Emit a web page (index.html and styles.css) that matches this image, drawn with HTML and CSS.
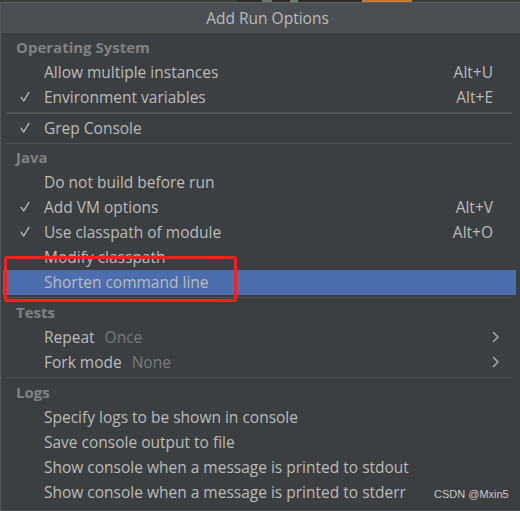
FILE: index.html
```html
<!DOCTYPE html>
<html>
<head>
<meta charset="utf-8">
<link rel="stylesheet" href="styles.css">
</head>
<body>
<div class="strip">
  <span class="seg s1"></span><span class="seg s2"></span><span class="seg s3"></span><span class="seg s4"></span><span class="seg s5"></span><span class="seg s6"></span><span class="seg s7"></span>
</div>
<div class="window">
  <div class="titlebar">Add Run Options</div>
  <div class="list">
    <div class="header">Operating System</div>
    <div class="row"><span class="check"></span><span class="label">Allow multiple instances</span><span class="key">Alt+U</span></div>
    <div class="row"><span class="check"><svg width="10" height="11" viewBox="0 0 10 11"><polyline points="0.8,5.8 3.8,9.8 9.2,0.8"/></svg></span><span class="label">Environment variables</span><span class="key">Alt+E</span></div>
    <div class="sep thick"></div>
    <div class="row"><span class="check"><svg width="10" height="11" viewBox="0 0 10 11"><polyline points="0.8,5.8 3.8,9.8 9.2,0.8"/></svg></span><span class="label">Grep Console</span></div>
    <div class="sep small"></div>
    <div class="header">Java</div>
    <div class="row"><span class="check"></span><span class="label">Do not build before run</span></div>
    <div class="row"><span class="check"><svg width="10" height="11" viewBox="0 0 10 11"><polyline points="0.8,5.8 3.8,9.8 9.2,0.8"/></svg></span><span class="label">Add VM options</span><span class="key">Alt+V</span></div>
    <div class="row"><span class="check"><svg width="10" height="11" viewBox="0 0 10 11"><polyline points="0.8,5.8 3.8,9.8 9.2,0.8"/></svg></span><span class="label">Use classpath of module</span><span class="key">Alt+O</span></div>
    <div class="row"><span class="check"></span><span class="label">Modify classpath</span></div>
    <div class="row selected"><span class="check"></span><span class="label">Shorten command line</span><span class="redbox"></span></div>
    <div class="sep"></div>
    <div class="header">Tests</div>
    <div class="row"><span class="check"></span><span class="label">Repeat</span><span class="hint">Once</span><span class="chev"><svg width="7" height="12" viewBox="0 0 7 12"><polyline points="1,1 6,6 1,11"/></svg></span></div>
    <div class="row"><span class="check"></span><span class="label">Fork mode</span><span class="hint">None</span><span class="chev"><svg width="7" height="12" viewBox="0 0 7 12"><polyline points="1,1 6,6 1,11"/></svg></span></div>
    <div class="sep"></div>
    <div class="header">Logs</div>
    <div class="row"><span class="check"></span><span class="label">Specify logs to be shown in console</span></div>
    <div class="row"><span class="check"></span><span class="label">Save console output to file</span></div>
    <div class="row"><span class="check"></span><span class="label">Show console when a message is printed to stdout</span></div>
    <div class="row"><span class="check"></span><span class="label">Show console when a message is printed to stderr</span><span class="watermark">CSDN @Mxin5</span></div>
  </div>
</div>
</body>
</html>
```
FILE: styles.css
```css
html, body {
  margin: 0;
  padding: 0;
}
body {
  width: 520px;
  height: 511px;
  overflow: hidden;
  background: #3c3f41;
  font-family: "Open Sans", "Noto Sans", sans-serif;
  color: #bbbbbb;
}
.strip {
  height: 2px;
  display: flex;
  background: #3a3c3e;
}
.seg { display: block; height: 2px; }
.s1 { width: 237px; background: #3a3c3e; }
.s2 { width: 25px; background: #2b2b2b; }
.s3 { width: 10px; background: #6f7070; }
.s4 { width: 18px; background: #2b2b2b; }
.s5 { width: 8px; background: #6a8759; }
.s6 { width: 64px; background: #2b2b2b; }
.s7 { width: 50px; background: #cc7832; }
.window {
  border-left: 1px solid #55585b;
  border-top: 1px solid #5e6165;
  height: 507px;
  border-bottom: 1px solid #4a4d50;
}
.titlebar {
  height: 30px;
  background: #4b4f53;
  display: flex;
  align-items: center;
  justify-content: center;
  font-size: 15.5px;
  color: #bbbbbb;
  padding-left: 14px;
}
.list {
  padding: 2px 4px 0 2px;
}
.header {
  height: 25px;
  box-sizing: border-box;
  padding-bottom: 2px;
  display: flex;
  align-items: center;
  padding-left: 13px;
  font-weight: bold;
  font-size: 15px;
  color: #808284;
}
.row {
  position: relative;
  height: 25px;
  box-sizing: border-box;
  padding-bottom: 2px;
  display: flex;
  align-items: center;
  font-size: 15.5px;
}
.row.selected {
  background: #4b6eaf;
}
.check {
  width: 41px;
  height: 23px;
  display: flex;
  align-items: center;
  padding-left: 17px;
  box-sizing: border-box;
}
.check svg {
  fill: none;
  stroke: #b5b5b5;
  stroke-width: 1.4;
}
.label {
  white-space: nowrap;
}
.key {
  margin-left: auto;
  margin-right: 23px;
}
.hint {
  margin-left: 10px;
  color: #787a7c;
}
.chev {
  margin-left: auto;
  margin-right: 17px;
  display: flex;
  align-items: center;
}
.chev svg {
  fill: none;
  stroke: #a8a8a8;
  stroke-width: 1.5;
}
.sep {
  height: 5px;
  display: flex;
  align-items: center;
  margin: 0 4px 0 3px;
}
.sep::before {
  content: "";
  display: block;
  width: 100%;
  height: 1px;
  background: #515456;
}
.sep.thick { height: 6px; }
.sep.thick::before { height: 2px; background: #505355; }
.sep.small { height: 4px; }
.redbox {
  position: absolute;
  left: 1px;
  top: -14px;
  width: 227px;
  height: 40px;
  border: 3px solid #f5211f;
  border-radius: 3px;
}
.watermark {
  position: absolute;
  left: 431px;
  top: 8px;
  font-family: "Liberation Sans", Arial, sans-serif;
  font-size: 11px;
  color: #c9c9c9;
  white-space: nowrap;
}
```
